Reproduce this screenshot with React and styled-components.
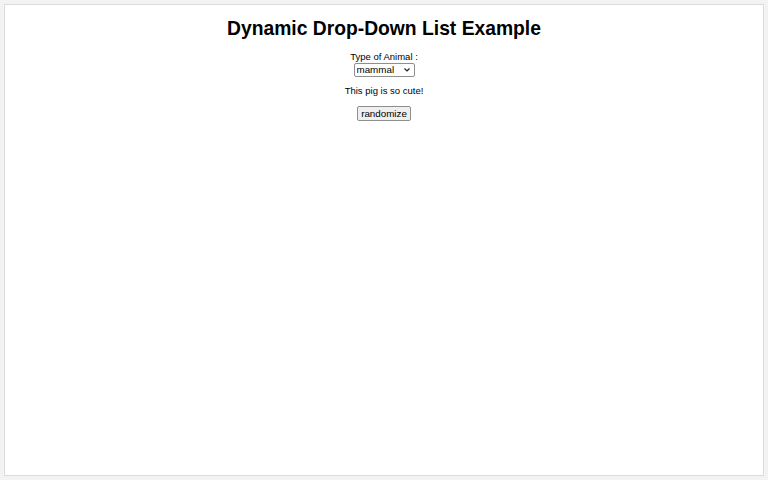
import React, { useState } from "react";
import styled, { createGlobalStyle } from "styled-components";

const animals = {
  mammal: ["pig", "cow", "dog"],
  bird: ["parrot", "owl", "duck"],
  fish: ["trout", "salmon", "carp"],
};

const GlobalStyle = createGlobalStyle`
  html, body {
    margin: 0;
    height: 100%;
    background: #f3f3f3;
  }
  body {
    padding: 4px;
    box-sizing: border-box;
    font-family: "Liberation Sans", Arial, sans-serif;
  }
  #root {
    height: 100%;
  }
`;

const Panel = styled.div`
  box-sizing: border-box;
  height: 472px;
  background: #ffffff;
  border: 1px solid #dcdcdc;
  display: flex;
  flex-direction: column;
  align-items: center;
  padding-top: 13px;
  color: #000;
`;

const Title = styled.h1`
  margin: 0 0 11px;
  font-size: 19.3px;
  line-height: 22px;
  font-weight: bold;
`;

const Field = styled.label`
  display: flex;
  flex-direction: column;
  align-items: center;
  font-size: 9.5px;
  line-height: 11px;
  gap: 1px;
`;

const SelectWrap = styled.span`
  position: relative;
  display: inline-flex;
`;

const Select = styled.select`
  box-sizing: border-box;
  appearance: none;
  font-family: "Liberation Sans", Arial, sans-serif;
  font-size: 9.8px;
  width: 61px;
  height: 14px;
  padding: 0 0 0 2px;
  border: 1px solid #8f8f8f;
  border-radius: 2px;
  background: #fff;
  color: #000;
  line-height: 12px;
`;

const Chevron = styled.svg`
  position: absolute;
  right: 5px;
  top: 5px;
  pointer-events: none;
`;

const Message = styled.p`
  margin: 8px 0 10px;
  font-size: 9.5px;
  line-height: 11px;
`;

const Button = styled.button`
  box-sizing: border-box;
  font-family: "Liberation Sans", Arial, sans-serif;
  font-size: 9.8px;
  width: 54px;
  height: 15px;
  padding: 0;
  border: 1px solid #8f8f8f;
  border-radius: 2px;
  background: #efefef;
  color: #000;
  line-height: 12px;
`;

export default function App() {
  const [kind, setKind] = useState("mammal");
  const [animal, setAnimal] = useState("pig");

  function randomize() {
    const kinds = Object.keys(animals);
    const k = kinds[Math.floor(Math.random() * kinds.length)];
    const list = animals[k];
    setKind(k);
    setAnimal(list[Math.floor(Math.random() * list.length)]);
  }

  return (
    <>
      <GlobalStyle />
      <Panel>
        <Title>Dynamic Drop-Down List Example</Title>
        <Field>
          Type of Animal :
          <SelectWrap>
            <Select
              value={kind}
              onChange={(e) => {
                setKind(e.target.value);
                setAnimal(animals[e.target.value][0]);
              }}
            >
              {Object.keys(animals).map((k) => (
                <option key={k} value={k}>
                  {k}
                </option>
              ))}
            </Select>
            <Chevron width="6" height="4" viewBox="0 0 6 4">
              <path d="M0.5 0.5 L3 3 L5.5 0.5" fill="none" stroke="#222" strokeWidth="1.2" />
            </Chevron>
          </SelectWrap>
        </Field>
        <Message>This {animal} is so cute!</Message>
        <Button onClick={randomize}>randomize</Button>
      </Panel>
    </>
  );
}
